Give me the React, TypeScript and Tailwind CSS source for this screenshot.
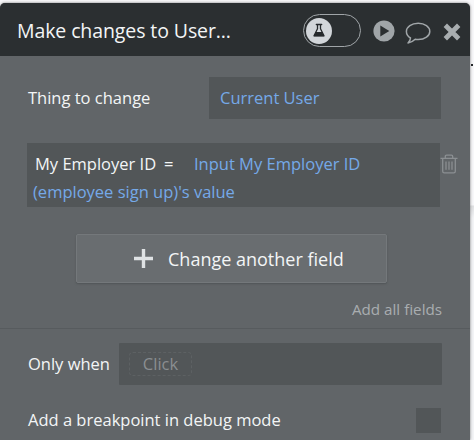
import React from "react";

function FlaskToggle() {
  return (
    <div className="flex h-[33px] w-[58px] items-center rounded-full border-[1.5px] border-[#a0a5a8] pl-[2px]">
      <div className="flex size-[26px] items-center justify-center rounded-full bg-[#d2d6da]">
        <svg width="14" height="15" viewBox="0 0 14 15" fill="none">
          <path d="M4.3 1.5h5.4M5.5 1.5v4.300L2 12.700h10L8.500 5.800V1.500" stroke="#25292c" strokeWidth="1.300" strokeLinejoin="round" strokeLinecap="round" />
          <path d="M4 9h6l2.400 4.400H1.600z" fill="#25292c" />
        </svg>
      </div>
    </div>
  );
}

function PlayIcon() {
  return (
    <svg className="ml-[11.500px] mt-px" width="22" height="22" viewBox="0 0 22 22">
      <circle cx="11" cy="11" r="10.600" fill="#a0a5a8" />
      <path d="M7.300 5.600v10.800l9-5.400z" fill="#2b2f31" />
    </svg>
  );
}

function CommentIcon() {
  return (
    <svg className="ml-[10.500px] mt-[5px]" width="26" height="23" viewBox="0 0 26 23" fill="none">
      <path d="M13.200 1.300c6.600 0 11.600 3.700 11.600 8.200s-5 8.100-11.600 8.100c-1 0-2-.1-3-.3-1.900 1.900-4.200 3.200-7.200 3.700 1.600-1.500 2.400-3 2.500-5-2.500-1.500-4.100-3.800-4.100-6.500 0-4.500 5.200-8.200 11.800-8.200z" stroke="#a0a5a8" strokeWidth="1.500" strokeLinejoin="round" />
    </svg>
  );
}

function CloseIcon() {
  return (
    <svg className="ml-[12px] mt-[3px]" width="18" height="18" viewBox="0 0 18 18">
      <path d="M4 4l10 10M14 4L4 14" stroke="#a8adaf" strokeWidth="4.800" strokeLinecap="square" />
    </svg>
  );
}

function TrashIcon() {
  return (
    <svg className="mt-[11px]" width="18" height="20" viewBox="0 0 18 20" fill="none" stroke="#8b8f92" strokeWidth="1.300">
      <path d="M.5 4.300h17M5.300 4V2.500c0-.8.500-1.300 1.300-1.300h4.800c.8 0 1.300.5 1.300 1.300V4M2.700 4.500v12.700c0 1 .6 1.600 1.500 1.600h9.600c.9 0 1.500-.6 1.500-1.600V4.500M6 7.500v8.300M9 7.500v8.300M12 7.500v8.300" />
    </svg>
  );
}

export default function App() {
  return (
    <div className="relative h-[440px] w-[474px] overflow-hidden bg-[linear-gradient(#f8f8fa_0_205px,#dedfe1_206px,#f3f4f6_218px)] pt-[3px] font-['Open_Sans',sans-serif] text-[16.5px] leading-[24px] text-[#f3f5f6]">
      <div className="absolute left-[471px] top-[64px] size-[2px] bg-[#24272a]" />
      <section className="h-[437px] w-[470px] overflow-hidden rounded-t-[5px] bg-[#616568] shadow-[0_0_3px_#777]">
        <header className="flex h-[53px] items-center bg-[#2b2f31] pl-[17px] pt-[2px]">
          <h1 className="w-[286px] whitespace-nowrap text-[19.5px] tracking-[-0.1px]">Make changes to User...</h1>
          <FlaskToggle />
          <PlayIcon />
          <CommentIcon />
          <CloseIcon />
        </header>

        <div className="flex h-[87px] items-start pl-[28px] pt-[21px]">
          <span className="mt-[9px] w-[181px]">Thing to change</span>
          <div className="h-[42px] w-[232px] bg-[#525658] pl-[11px] pt-[9px] text-[#75a9e8]">Current User</div>
        </div>

        <div className="flex pl-[27px]">
          <div className="h-[64px] w-[413px] whitespace-nowrap bg-[#525658] pl-[6px] pt-[9px]">
            <div className="flex pl-[2px]">
              <span className="w-[129px]">My Employer ID</span>
              <span className="w-[30px]">=</span>
              <span className="text-[#75a9e8]">Input My Employer ID</span>
            </div>
            <div className="mt-[4px] text-[#75a9e8]">(employee sign up)'s value</div>
          </div>
          <TrashIcon />
        </div>

        <button className="ml-[76px] mt-[27px] flex h-[49px] w-[311px] items-center rounded-[2px] border border-[#74787b] bg-[#696d70] pl-[57px] text-[18px] shadow-[0_1px_2px_#505457]">
          <svg width="19" height="19" viewBox="0 0 19 19">
            <path d="M9.500 0v19M0 9.500h19" stroke="#dfe2e4" strokeWidth="3.400" />
          </svg>
          <span className="ml-[15px] whitespace-nowrap">Change another field</span>
        </button>

        <div className="mr-[28px] mt-[14px] text-right text-[15.2px] text-[#a9adb0]">Add all fields</div>
        <div className="mt-[7px] h-px bg-[#575b5e]" />

        <div className="mt-[14px] flex pl-[28px]">
          <span className="mt-[9px] w-[91px] whitespace-nowrap">Only when</span>
          <div className="h-[42px] w-[323px] rounded-[1px] bg-[#525658] pl-[10px] pt-[9px]">
            <span className="flex h-[24px] w-[63px] items-center justify-center rounded-[4px] border border-dashed border-[#5d6163] text-[#8a8e91]">Click</span>
          </div>
        </div>
        <div className="mt-[23px] flex items-center pl-[28px]">
          <span className="-mt-[2px] w-[388px]">Add a breakpoint in debug mode</span>
          <div className="size-[25px] bg-[#525658]" />
        </div>
      </section>
    </div>
  );
}
